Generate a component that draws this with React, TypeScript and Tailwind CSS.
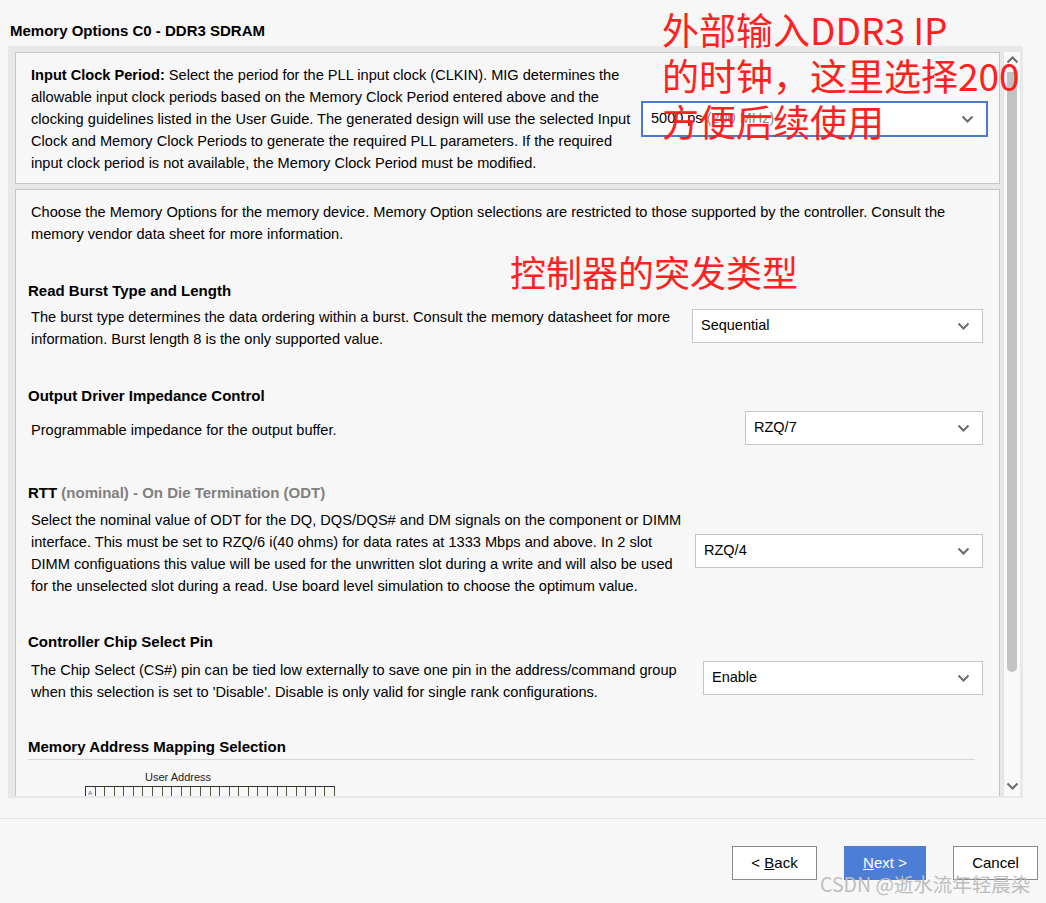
import React from 'react';

const Chevron: React.FC<{ up?: boolean; className?: string }> = ({ up, className }) => (
  <svg width="13" height="8" viewBox="0 0 13 8" className={className}>
    <path
      d={up ? 'M1.5 6.5 L6.5 1.5 L11.5 6.5' : 'M1.5 1.5 L6.5 6.5 L11.5 1.5'}
      fill="none"
      stroke="#6b6b6b"
      strokeWidth="2"
    />
  </svg>
);

interface SelectProps {
  width: string;
  children: React.ReactNode;
  focused?: boolean;
  className?: string;
}

const Select: React.FC<SelectProps> = ({ width, children, focused, className }) => (
  <div
    className={`${width} shrink-0 bg-white flex items-center justify-between pl-[8px] pr-[12px] text-[14.5px] ${
      focused ? 'h-[36px] border-2 border-[#4a7acb]' : 'h-[34px] border border-[#c6c6c6]'
    } ${className ?? ''}`}
  >
    <span className="whitespace-nowrap">{children}</span>
    <Chevron />
  </div>
);

const Heading: React.FC<{ children: React.ReactNode; className?: string }> = ({ children, className }) => (
  <div className={`font-bold text-[15px] leading-[22px] whitespace-nowrap ${className ?? ''}`}>{children}</div>
);

const Lines: React.FC<{ lines: string[]; className?: string }> = ({ lines, className }) => (
  <div className={`text-[14.6px] leading-[22px] pl-[3px] ${className ?? ''}`}>
    {lines.map((l, i) => (
      <div key={i} className="whitespace-nowrap">
        {l}
      </div>
    ))}
  </div>
);

const BitRow: React.FC = () => (
  <div className="ml-[57px] mt-[3px] w-[250px] h-[14px] border-t border-l border-[#333] grid grid-cols-[repeat(26,minmax(0,1fr))]">
    {Array.from({ length: 26 }).map((_, i) => (
      <div key={i} className="border-r border-[#55553a] relative">
        {i === 0 && <span className="absolute left-[2px] top-[3px] text-[6px] leading-[6px] text-[#3355aa]">A</span>}
      </div>
    ))}
  </div>
);

export default function App() {
  return (
    <div className="relative w-[1046px] h-[903px] bg-[#f7f7f7] text-black overflow-hidden font-['Liberation_Sans',Arial,sans-serif]">
      <div className="pt-[23px] pl-[10px] text-[15px] leading-[16px] font-bold">Memory Options C0 - DDR3 SDRAM</div>

      <div className="mt-[7px] ml-[8px] w-[1015px] h-[752px] bg-[#e8e8e8] pt-[6px] pl-[7px] pr-[3px] pb-[2px] flex gap-[3px]">
        <div className="w-[985px] flex flex-col gap-[5px] overflow-hidden">
          {/* Input clock period */}
          <div className="h-[132px] shrink-0 border border-[#c6c6c6] bg-[#f7f7f7] flex items-center pl-[12px] pr-[11px] pt-[2px]">
            <div className="text-[14.6px] leading-[22px] pl-[3px] w-[611px]">
              <div className="whitespace-nowrap">
                <span className="font-bold">Input Clock Period:</span> Select the period for the PLL input clock (CLKIN). MIG determines the
              </div>
              <div className="whitespace-nowrap">allowable input clock periods based on the Memory Clock Period entered above and the</div>
              <div className="whitespace-nowrap">clocking guidelines listed in the User Guide. The generated design will use the selected Input</div>
              <div className="whitespace-nowrap">Clock and Memory Clock Periods to generate the required PLL parameters. If the required</div>
              <div className="whitespace-nowrap">input clock period is not available, the Memory Clock Period must be modified.</div>
            </div>
            <div className="ml-auto">
              <Select width="w-[347px]" focused>
                5000 ps <span className="text-[#8a8a8a]">(200 MHz)</span>
              </Select>
            </div>
          </div>

          {/* Memory options */}
          <div className="flex-1 border-x border-t border-[#c6c6c6] bg-[#f7f7f7] pl-[12px] pr-[16px] pt-[11px] overflow-hidden">
            <Lines
              lines={[
                'Choose the Memory Options for the memory device. Memory Option selections are restricted to those supported by the controller. Consult the',
                'memory vendor data sheet for more information.',
              ]}
            />

            <Heading className="mt-[35px]">Read Burst Type and Length</Heading>
            <div className="mt-[4px] flex items-start justify-between">
              <Lines
                lines={[
                  'The burst type determines the data ordering within a burst. Consult the memory datasheet for more',
                  'information. Burst length 8 is the only supported value.',
                ]}
              />
              <Select width="w-[291px]" className="mt-[3px]">
                Sequential
              </Select>
            </div>

            <Heading className="mt-[35px]">Output Driver Impedance Control</Heading>
            <div className="mt-[4px] flex items-start justify-between">
              <Lines lines={['Programmable impedance for the output buffer.']} className="pt-[8px]" />
              <Select width="w-[238px]">RZQ/7</Select>
            </div>

            <Heading className="mt-[37px]">
              RTT <span className="text-[#808080]">(nominal) - On Die Termination (ODT)</span>
            </Heading>
            <div className="mt-[5px] flex items-start justify-between">
              <Lines
                lines={[
                  'Select the nominal value of ODT for the DQ, DQS/DQS# and DM signals on the component or DIMM',
                  'interface. This must be set to RZQ/6 i(40 ohms) for data rates at 1333 Mbps and above. In 2 slot',
                  'DIMM configuations this value will be used for the unwritten slot during a write and will also be used',
                  'for the unselected slot during a read. Use board level simulation to choose the optimum value.',
                ]}
              />
              <Select width="w-[288px]" className="mt-[25px]">
                RZQ/4
              </Select>
            </div>

            <Heading className="mt-[34px]">Controller Chip Select Pin</Heading>
            <div className="mt-[6px] flex items-start justify-between">
              <Lines
                lines={[
                  'The Chip Select (CS#) pin can be tied low externally to save one pin in the address/command group',
                  "when this selection is set to 'Disable'. Disable is only valid for single rank configurations.",
                ]}
                className="leading-[21px]"
              />
              <Select width="w-[280px]" className="mt-[2px]">
                Enable
              </Select>
            </div>

            <Heading className="mt-[33px]">Memory Address Mapping Selection</Heading>
            <div className="mt-[1px] w-[947px] h-px bg-[#d4d4d4]" />
            <div className="mt-[11px] ml-[117px] text-[11px] leading-[12px] text-[#222]">User Address</div>
            <BitRow />
          </div>
        </div>

        {/* scrollbar */}
        <div className="w-[17px] bg-[#f9f9f9] border-l border-[#e2e2e2] flex flex-col items-center">
          <Chevron up className="mt-[4px]" />
          <div className="mt-[8px] w-[10px] h-[600px] rounded-b-[5px] bg-[#c2c2c2]" />
          <div className="flex-1" />
          <Chevron className="mb-[6px]" />
        </div>
      </div>

      <div className="mt-[20px] h-px bg-[#e3e3e3]" />

      <div className="mt-[27px] flex justify-end gap-[27px] pr-[8px] text-[15px]">
        <button className="w-[85px] h-[34px] bg-white border border-[#8a8a8a]">
          &lt; <span className="underline">B</span>ack
        </button>
        <button className="w-[82px] h-[34px] bg-[#4d7ed6] text-white">
          <span className="underline">N</span>ext &gt;
        </button>
        <button className="w-[85px] h-[34px] bg-white border border-[#8a8a8a]">Cancel</button>
      </div>

      {/* annotations */}
      <div className="absolute left-[662px] top-[6px] text-[37px] leading-[46px] text-[#ff2020] whitespace-nowrap font-['Noto_Sans_CJK_SC','Noto_Sans',sans-serif]">
        外部输入DDR3 IP
        <br />
        的时钟，这里选择200
        <br />
        方便后续使用
      </div>
      <div className="absolute left-[510px] top-[248px] text-[36px] leading-[46px] text-[#ff2020] whitespace-nowrap font-['Noto_Sans_CJK_SC','Noto_Sans',sans-serif]">
        控制器的突发类型
      </div>
      <div className="absolute left-[820px] top-[873px] text-[19.5px] leading-[22px] text-[#bdbdbd] whitespace-nowrap font-['Noto_Sans_CJK_SC','Noto_Sans',sans-serif]">
        CSDN @逝水流年轻晨染
      </div>
    </div>
  );
}
